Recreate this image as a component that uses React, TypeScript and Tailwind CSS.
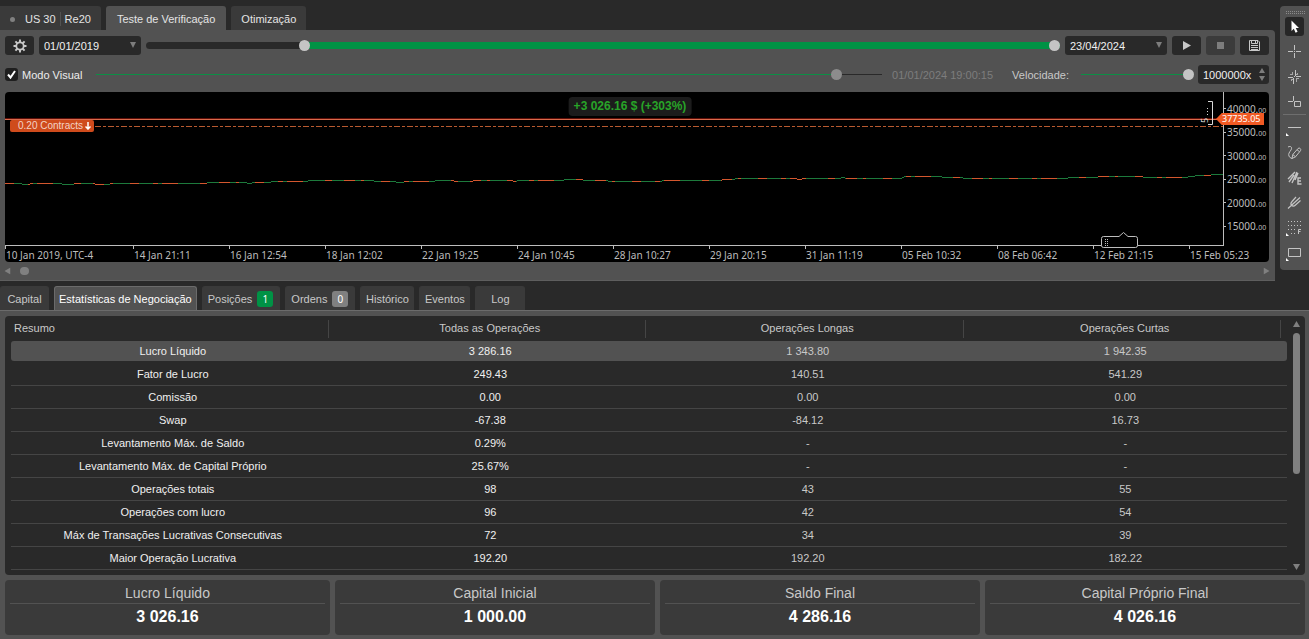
import { ReactNode, useState } from 'react'
import clsx from 'clsx'

const THUMB =
  '[&::-webkit-slider-thumb]:pointer-events-auto [&::-webkit-slider-thumb]:size-[11px] [&::-webkit-slider-thumb]:appearance-none [&::-webkit-slider-thumb]:rounded-full'

const topics = ['Todas as Operações', 'Operações Longas', 'Operações Curtas']

const stats = [
  ['Lucro Líquido', '3 286.16', '1 343.80', '1 942.35'],
  ['Fator de Lucro', '249.43', '140.51', '541.29'],
  ['Comissão', '0.00', '0.00', '0.00'],
  ['Swap', '-67.38', '-84.12', '16.73'],
  ['Levantamento Máx. de Saldo', '0.29%', '-', '-'],
  ['Levantamento Máx. de Capital Próprio', '25.67%', '-', '-'],
  ['Operações totais', '98', '43', '55'],
  ['Operações com lucro', '96', '42', '54'],
  ['Máx de Transações Lucrativas Consecutivas', '72', '34', '39'],
  ['Maior Operação Lucrativa', '192.20', '192.20', '182.22'],
]

const totals = [
  { label: 'Lucro Líquido', value: '3 026.16' },
  { label: 'Capital Inicial', value: '1 000.00' },
  { label: 'Saldo Final', value: '4 286.16' },
  { label: 'Capital Próprio Final', value: '4 026.16' },
]

const times = [
  '10 Jan 2019, UTC-4',
  '14 Jan 21:11',
  '16 Jan 12:54',
  '18 Jan 12:02',
  '22 Jan 19:25',
  '24 Jan 10:45',
  '28 Jan 10:27',
  '29 Jan 20:15',
  '31 Jan 11:19',
  '05 Feb 10:32',
  '08 Feb 06:42',
  '12 Feb 21:15',
  '15 Feb 05:23',
]

const prices = ['40000', '35000', '30000', '25000', '20000', '15000']

const series =
  '0,91.5 16,91.5 18,92.5 24,92.5 26,91.5 56,91.5 58,92.5 68,92.5 70,91.5 88,91.5 92,92.5 104,92.5 106,91.5 200,91.5 204,90.5 240,90.5 244,91.5 250,90.5 264,90.5 268,89.5 300,89.5 306,88.5 320,88.5 366,88.5 372,89.5 388,89.5 394,90.5 404,89.5 428,89.5 432,88.5 446,88.5 452,89.5 466,89.5 470,88.5 506,88.5 510,89.5 514,88.5 556,88.5 562,87.5 576,87.5 580,88.5 600,88.5 606,89.5 654,89.5 660,88.5 714,88.5 720,87.5 740,86.5 756,86.5 790,86.5 794,87.5 800,86.5 834,86.5 838,85.5 842,86.5 896,86.5 900,84.5 934,84.5 940,85.5 956,85.5 960,86.5 1000,86.5 1010,86.5 1060,86.5 1066,85.5 1090,85.5 1096,84.5 1136,84.5 1140,85.5 1180,85.5 1186,84.5 1194,83.5 1218,82.5'

function TriangleDown({ className = 'size-1.5' }: { className?: string }) {
  return (
    <svg viewBox="0 0 6 6" preserveAspectRatio="none" className={className} fill="currentColor">
      <path d="M0 0h6L3 6z" />
    </svg>
  )
}

function DateSelect({ label, value }: { label: string; value: string }) {
  return (
    <div className="relative w-[102px] shrink-0">
      <select
        aria-label={label}
        defaultValue={value}
        className="block h-[19px] w-full appearance-none rounded-[3px] bg-[#292929] pl-[5px] pt-px text-[11px] leading-[18px] text-[#f0f0f0]"
      >
        <option>{value}</option>
      </select>
      <TriangleDown className="pointer-events-none absolute right-[5px] top-[6px] size-1.5 text-[#7d7d7d]" />
    </div>
  )
}

function IconButton({ label, dim, children }: { label: string; dim?: boolean; children: ReactNode }) {
  return (
    <button
      aria-label={label}
      className={clsx(
        'flex h-[19px] w-[29px] shrink-0 items-center justify-center rounded-[3px]',
        dim ? 'bg-[#3b3b3b] text-[#7d7d7d]' : 'bg-[#292929] text-[#c8c8c8]',
      )}
    >
      {children}
    </button>
  )
}

function PeriodSlider() {
  const [from, setFrom] = useState(169)
  const [to, setTo] = useState(1000)
  const input = clsx(
    'pointer-events-none w-full appearance-none bg-transparent [grid-area:1/1] [&::-webkit-slider-thumb]:bg-[#c4c4c4]',
    THUMB,
  )
  return (
    <div className="grid h-[19px] min-w-0 flex-1 items-center">
      <div
        className="h-[7px] rounded-full [grid-area:1/1]"
        style={{
          background: `linear-gradient(to right, #292929 ${from / 10}%, #009245 ${from / 10}%, #009245 ${to / 10}%, #292929 ${to / 10}%)`,
        }}
      />
      <input type="range" aria-label="Início do período" min={0} max={1000} value={from} onChange={(e) => setFrom(Number(e.target.value))} className={input} />
      <input type="range" aria-label="Fim do período" min={0} max={1000} value={to} onChange={(e) => setTo(Number(e.target.value))} className={input} />
    </div>
  )
}

function LineSlider({ label, start, dim, className }: { label: string; start: number; dim?: boolean; className?: string }) {
  const [value, setValue] = useState(start)
  return (
    <div className={clsx('grid h-[19px] items-center', className)}>
      <div className="flex h-px bg-[#292929] [grid-area:1/1]">
        <div className="h-px bg-[#0c8f45]" style={{ width: `${value / 10}%` }} />
      </div>
      <input
        type="range"
        aria-label={label}
        min={0}
        max={1000}
        value={value}
        onChange={(e) => setValue(Number(e.target.value))}
        className={clsx(
          'w-full appearance-none bg-transparent [grid-area:1/1]',
          THUMB,
          dim ? '[&::-webkit-slider-thumb]:bg-[#8c8c8c]' : '[&::-webkit-slider-thumb]:bg-[#c4c4c4]',
        )}
      />
    </div>
  )
}

function Controls() {
  return (
    <div className="pl-[5px] pr-1.5 pt-1.5 text-[11px]">
      <div className="flex items-center gap-[5px]">
        <IconButton label="Configurações">
          <svg viewBox="0 0 14 14" className="size-3.5" fill="none" stroke="currentColor">
            <circle cx="7" cy="7" r="3.700" strokeWidth="1.800" />
            <path strokeWidth="2" d="M7 .5v2.700M7 10.800v2.700M.5 7h2.700M10.800 7h2.700M2.400 2.400l1.900 1.900M9.700 9.700l1.900 1.900M2.400 11.600l1.900-1.900M9.700 4.300l1.900-1.900" />
          </svg>
        </IconButton>
        <DateSelect label="Data inicial" value="01/01/2019" />
        <PeriodSlider />
        <DateSelect label="Data final" value="23/04/2024" />
        <IconButton label="Iniciar">
          <svg viewBox="0 0 8 9" className="h-[9px] w-2" fill="currentColor">
            <path d="M0 0l8 4.500L0 9z" />
          </svg>
        </IconButton>
        <IconButton label="Parar" dim>
          <svg viewBox="0 0 7 7" className="size-[7px]" fill="currentColor">
            <path d="M0 0h7v7H0z" />
          </svg>
        </IconButton>
        <IconButton label="Salvar">
          <svg viewBox="0 0 11 11" className="size-[11px]" fill="none" stroke="currentColor">
            <path d="M.5.5h8.500l1.500 1.500v8.500H.5zM2.500.5v3h6v-3M6.500 1v2M2 5.500h7M2 7.500h7M2 9.500h7" />
          </svg>
        </IconButton>
      </div>

      <div className="mt-[10px] flex items-center">
        <label className="flex items-center gap-1 whitespace-nowrap text-[#ededed]">
          <span className="grid size-[13px] place-items-center">
            <input type="checkbox" defaultChecked className="peer size-[13px] appearance-none rounded-[3px] bg-[#1f1f1f] [grid-area:1/1]" />
            <svg viewBox="0 0 13 13" className="pointer-events-none invisible size-[13px] [grid-area:1/1] peer-checked:visible" fill="none" stroke="#fff" strokeWidth="2">
              <path d="M3 6.500l2.500 3L10 3" />
            </svg>
          </span>
          Modo Visual
        </label>
        <LineSlider label="Progresso" start={948} dim className="ml-[14px] min-w-0 flex-1" />
        <span className="ml-[10px] w-[100px] shrink-0 whitespace-nowrap text-[#7d7d7d]">01/01/2024 19:00:15</span>
        <span className="ml-5 shrink-0 text-[#c8c8c8]">Velocidade:</span>
        <LineSlider label="Velocidade" start={1000} className="ml-3 mr-1 w-[113px] shrink-0" />
        <div className="flex h-[19px] w-[71px] shrink-0 items-center justify-between rounded-[3px] bg-[#292929] pl-[5px] pr-1">
          <input aria-label="Valor da velocidade" defaultValue="1000000x" className="w-[52px] bg-transparent text-[#f0f0f0]" />
          <span className="flex flex-col gap-[3px] text-[#7d7d7d]">
            <button aria-label="Mais rápido">
              <TriangleDown className="block h-[5px] w-1.5 rotate-180" />
            </button>
            <button aria-label="Mais lento">
              <TriangleDown className="block h-[5px] w-1.5" />
            </button>
          </span>
        </div>
      </div>
    </div>
  )
}

function Chart() {
  return (
    <div className="ml-[5px] mr-1.5 mt-2 overflow-hidden rounded bg-black font-['Noto_Sans',sans-serif] text-[10px] text-[#bdbdbd]">
      <div className="relative flex">
        <div className="relative h-[154px] min-w-0 flex-1 border-b border-r border-[#bdbdbd]">
          <svg viewBox="0 0 1218 153" preserveAspectRatio="none" className="absolute inset-0 h-full w-full" fill="none" shapeRendering="crispEdges">
            <polyline points={series} stroke="#1d7a3c" />
            <polyline points={series} stroke="#d4572e" strokeDasharray="9 14 5 4 16 22 7 12 11 6 3 17" />
            <path d="M0 26.500H1218" stroke="#5c0f08" />
            <path d="M0 27.500H1218" stroke="#d96a4c" />
            <path d="M90 34.500H1218" stroke="#b85a30" strokeDasharray="6 2 3 2" />
          </svg>
          <span className="absolute left-1/2 top-[5px] ml-4 -translate-x-1/2 whitespace-nowrap rounded bg-[#1c1c1c] px-[5px] font-['Liberation_Sans',sans-serif] text-[12px] font-bold leading-[19px] text-[#28a428]">
            +3 026.16 $ (+303%)
          </span>
          <span className="absolute left-[5px] top-[28px] flex h-3 w-[84px] items-center gap-0.5 whitespace-nowrap rounded-xs bg-[#cf4b1c] pl-2 font-['Liberation_Sans',sans-serif] text-[10px] leading-3 text-[#f3d3c6]">
            0.20 Contracts
            <svg viewBox="0 0 6 8" className="h-2 w-1.5 shrink-0" fill="none" stroke="#fff" strokeWidth="1.500">
              <path d="M3 0v7M.5 4.500L3 7l2.500-2.500" />
            </svg>
          </span>
          <svg viewBox="0 0 22 26" className="absolute right-[9px] top-2 h-[26px] w-[22px]" fill="none" stroke="#d8d8d8">
            <path d="M16 1.500h4.500v23H16" />
            <path d="M15.500 8v9" strokeDasharray="1 2" />
            <text transform="translate(16 23) rotate(-90)" fontSize="9" fill="#d8d8d8" stroke="none">
              5
            </text>
          </svg>
          <svg viewBox="0 0 38 18" className="absolute -bottom-1 right-[84px] h-[18px] w-[38px]" fill="#000" stroke="#bdbdbd">
            <path d="M2.500 5.500H18l4.500-4 4.500 4h7.500q2 0 2 2v7q0 2-2 2h-32q-2 0-2-2v-7q0-2 2-2z" />
            <path d="M4.500 8v8M6.500 8v8" strokeDasharray="1 1" />
          </svg>
        </div>

        <div className="grid h-[146px] w-[45px] shrink-0 grid-rows-6 pt-[5px]">
          {prices.map((price) => (
            <div key={price} className="flex items-center leading-none">
              <span className="mr-px h-px w-[2px] bg-[#bdbdbd]" />
              <span>
                {price}.<span className="text-[7px]">00</span>
              </span>
            </div>
          ))}
        </div>
        <span className="absolute right-[5px] top-[21px] h-3 w-12 bg-[#f15a24] pl-[6px] text-[9px] leading-3 text-white [clip-path:polygon(0_50%,12%_0,100%_0,100%_100%,12%_100%)]">
          37735.05
        </span>
      </div>

      <div className="grid h-4 grid-cols-[128fr_repeat(11,96fr)_80fr]">
        {times.map((time) => (
          <div key={time} className="min-w-0 whitespace-nowrap">
            <div className="h-[3px] w-px bg-[#bdbdbd]" />
            <div className="pl-px leading-3 first-of-type:pl-0">{time}</div>
          </div>
        ))}
      </div>
    </div>
  )
}

function ChartScroll() {
  return (
    <div className="flex h-[19px] items-center border-b border-[#5e5e5e] pl-1 pr-[5px] pb-px text-[#808080]">
      <TriangleDown className="h-1.5 w-[7px] rotate-90" />
      <span className="ml-[9px] h-2 w-[9px] rounded-full bg-[#808080]" />
      <TriangleDown className="ml-auto h-1.5 w-[7px] -rotate-90" />
    </div>
  )
}

function Tool({ label, active, corner, children }: { label: string; active?: boolean; corner?: boolean; children: ReactNode }) {
  return (
    <button aria-label={label} className="flex h-[25px] w-full items-center justify-center">
      <svg viewBox="0 0 23 25" className="h-[25px] w-[23px]" fill="none" stroke="#c4c4c4">
        {active && <rect x="2" y="3" width="19" height="19" rx="3" fill="#262626" stroke="none" />}
        {children}
        {corner && <path d="M3 18l3 3H3z" fill="#fff" stroke="none" />}
      </svg>
    </button>
  )
}

function Toolbar() {
  return (
    <aside className="ml-[5px] mt-1.5 flex w-[29px] shrink-0 flex-col self-start rounded-l bg-[#525252] pb-[5px]">
      <svg viewBox="0 0 29 8" className="h-2 w-[29px]" stroke="#8a8a8a">
        <path d="M6 5.500h19M6 7.500h19" strokeDasharray="1 1" />
      </svg>
      <Tool label="Cursor" active>
        <path d="M8.500 6.500v10.500l2.300-2.200 1.800 3.900 2-1-1.800-3.700h3.200z" fill="#fff" stroke="none" />
      </Tool>
      <Tool label="Mira">
        <path d="M5 12.500h5M13 12.500h5M11.500 6v5M11.500 14v5" />
        <path d="M11 12.500h1" />
      </Tool>
      <Tool label="Mira dupla">
        <path d="M5 13.500h5M13 12.500h5M10.500 14v6M12.500 6v6M11 12.500h1" />
        <path d="M7 10.500h3M13 10.500h2M8 15.500h2M13 14.500h3M9.500 8v3M14.500 9v2M8.500 15v2M13.500 14v4" stroke="#a8a8a8" />
      </Tool>
      <Tool label="Medir">
        <path d="M5 12.500h5M10.500 7v5M11.500 12.500h6v5h-6z" />
      </Tool>
      <div className="mx-[3px] h-px bg-[#6e6e6e]" />
      <Tool label="Linha" corner>
        <path d="M5 12.500h13" />
      </Tool>
      <Tool label="Desenhar">
        <path d="M5 7c3-1.500 4.500.5 3 3-1.500 2.200-3 4-2 6 .6 1.400 1.500 2 3 2.500M9 18.500l.8-4 5.200-6q1.200-1 2.200 0t.3 2.200L12.500 16.800zM9.800 14.500l2.700 2.300M14 9.700l2.500 2" />
      </Tool>
      <Tool label="Ondas">
        <path strokeWidth="1.400" d="M5 14l7-7M6 17l5-7M9 18l5-11M12 15l3-7M18 13h-3v6h3.500M15 16h3" />
      </Tool>
      <Tool label="Garfo">
        <path strokeWidth="1.200" d="M5 18.500l12-11M8.500 15.500c-1-1.500-.5-3 .5-4L13 7M8.500 15.500c1.500 1 3 .5 4-.5l5-4.500" />
      </Tool>
      <Tool label="Fibonacci" corner>
        <path d="M5 6.500h13M5 10.500h13" strokeDasharray="1 2" />
        <path d="M5 14.500h8M8 18.500h6" strokeDasharray="1 2" />
        <path d="M15.500 19v-4.500H18M15.500 16.500h2" />
      </Tool>
      <Tool label="Retângulo" corner>
        <path d="M5.500 8.500h12v8h-12z" />
      </Tool>
    </aside>
  )
}

function Tab({ active, className, children }: { active?: boolean; className?: string; children: ReactNode }) {
  return (
    <button
      role="tab"
      aria-selected={!!active}
      className={clsx(
        'flex items-center justify-center whitespace-nowrap rounded-t-[3px] border border-b-0',
        active ? '-mb-px h-[25px] border-[#6b6b6b] bg-[#525252] px-1 pb-px text-white' : 'h-6 border-[#3a3a3a] bg-[#3a3a3a] px-[5px] text-[#c8c8c8]',
        className,
      )}
    >
      {children}
    </button>
  )
}

function Badge({ className, children }: { className: string; children: ReactNode }) {
  return (
    <span className={clsx("ml-[5px] mr-px size-4 rounded-[3px] font-['Noto_Sans',sans-serif] text-[10px] leading-4 text-white", className)}>
      {children}
    </span>
  )
}

function StatsTable() {
  return (
    <div className="flex rounded bg-[#292929] pb-[5px] pl-1.5 text-[11px]">
      <table className="w-full table-fixed border-separate border-spacing-0">
        <thead>
          <tr className="h-[25px] text-[#c8c8c8]">
            <th className="p-0 font-normal">
              <div className="h-[18px] border-r border-[#454545] pl-[3px] text-left leading-4">Resumo</div>
            </th>
            {topics.map((topic) => (
              <th key={topic} className="p-0 font-normal">
                <div className="h-[18px] border-r border-[#454545] pl-1.5 leading-4">{topic}</div>
              </th>
            ))}
            <th className="w-1.5 p-0" />
          </tr>
        </thead>
        <tbody>
          {stats.map((row, i) => (
            <tr
              key={row[0]}
              className={clsx(
                i === 0 ? 'h-5 *:bg-[#525252]' : '*:border-b *:border-[#454545]',
                i === 1 && 'h-[25px] *:pt-0.5',
                i > 1 && 'h-[23px]',
              )}
            >
              {row.map((cell, j) => (
                <td
                  key={j}
                  className={clsx('pl-1.5 text-center leading-4', j < 2 ? 'text-[#f0f0f0]' : 'text-[#c8c8c8]', i === 0 && j === 0 && 'rounded-l-[3px]')}
                >
                  {cell}
                </td>
              ))}
              <td className={clsx(i === 0 && 'rounded-r-[3px]')} />
            </tr>
          ))}
        </tbody>
      </table>
      <div className="flex w-[18px] shrink-0 flex-col items-center pt-[5px] text-[#808080]">
        <TriangleDown className="h-1.5 w-[7px] rotate-180" />
        <div className="mt-1.5 h-[141px] w-[7px] rounded-full bg-[#808080]" />
        <TriangleDown className="mt-auto h-1.5 w-[7px]" />
      </div>
    </div>
  )
}

export default function App() {
  return (
    <div className="flex min-h-screen flex-col bg-[#292929] font-['Liberation_Sans',Arial,sans-serif] text-[11px] leading-4">
      <div className="flex">
        <div className="min-w-0 flex-1">
          <div role="tablist" className="flex gap-[5px] pt-1.5 text-[#e4e4e4]">
            <button role="tab" aria-selected="false" className="flex h-6 items-center rounded-tr-[3px] bg-[#3a3a3a] pl-[10px] pr-[10px] pt-0.5">
              <span className="mr-[10px] size-[5px] rounded-full bg-[#808080]" />
              US 30
              <span className="mx-1 h-[14px] w-px bg-[#525252]" />
              Re20
            </button>
            <button role="tab" aria-selected="true" className="h-6 rounded-t-[3px] bg-[#525252] px-[11px] pt-0.5">
              Teste de Verificação
            </button>
            <button role="tab" aria-selected="false" className="h-6 rounded-t-[3px] bg-[#3a3a3a] px-[10px] pt-0.5">
              Otimização
            </button>
          </div>
          <div className="rounded-tr bg-[#525252]">
            <Controls />
            <Chart />
            <ChartScroll />
          </div>
        </div>
        <Toolbar />
      </div>

      <div role="tablist" className="flex gap-[5px] pt-[5px]">
        <Tab className="w-[49px]">Capital</Tab>
        <Tab active>Estatísticas de Negociação</Tab>
        <Tab>
          Posições
          <Badge className="bg-[#009245]">1</Badge>
        </Tab>
        <Tab>
          Ordens
          <Badge className="bg-[#808080]">0</Badge>
        </Tab>
        <Tab className="w-[54px]">Histórico</Tab>
        <Tab className="w-[51px]">Eventos</Tab>
        <Tab className="w-[50px]">Log</Tab>
      </div>
      <main className="flex-1 border-t border-[#6b6b6b] bg-[#525252] pb-1 pl-[5px] pr-1 pt-[5px]">
        <StatsTable />
        <div className="mt-[5px] grid grid-cols-[325fr_320fr_320fr_320fr] gap-[5px]">
          {totals.map((total) => (
            <section key={total.label} className="h-[55px] rounded bg-[#3a3a3a] px-[5px] pt-[5px] text-center">
              <h2 className="border-b border-[#525252] pb-[2px] text-[14px] text-[#c8c8c8]">{total.label}</h2>
              <p className="pt-1 text-[16px] font-bold leading-[18px] text-white">{total.value}</p>
            </section>
          ))}
        </div>
      </main>
    </div>
  )
}
